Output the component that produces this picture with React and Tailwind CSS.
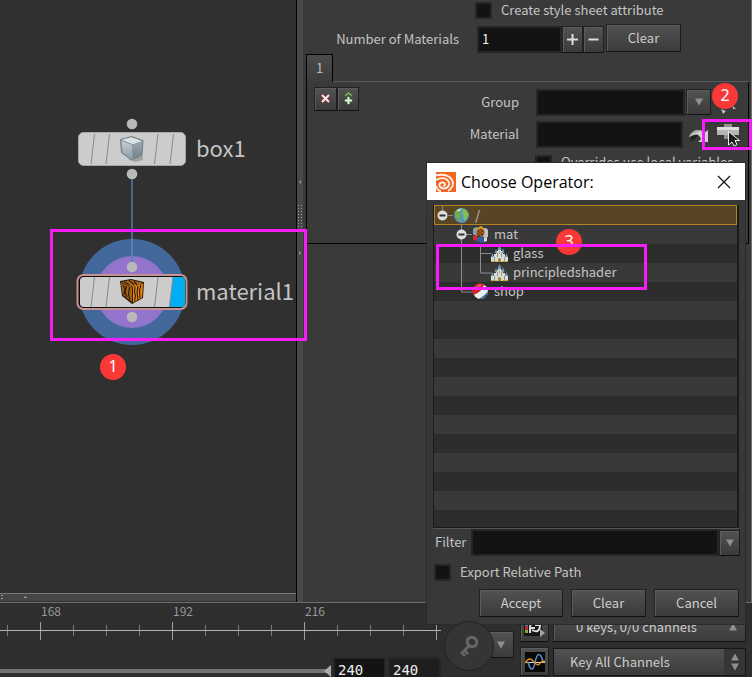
import React from "react";

const controlFont = "font-['Noto_Sans_CJK_SC',sans-serif]";

function Raised({ className = "", children, ...rest }) {
  return (
    <button
      type="button"
      className={
        "flex items-center justify-center border border-t-[#222] border-r-[#1c1c1c] border-b-[#111] border-l-[#222] bg-linear-to-b from-[#525252] to-[#3b3b3b] shadow-[inset_1px_1px_0_#5c5c5c] text-[#cccccc] " +
        className
      }
      {...rest}
    >
      {children}
    </button>
  );
}

function Check({ id, label }) {
  return (
    <div className="flex items-center gap-[9px]">
      <input
        id={id}
        type="checkbox"
        className="size-[17px] shrink-0 appearance-none border-2 border-[#262626] bg-[#131313] checked:bg-[#e0a030]"
      />
      <label htmlFor={id} className="pb-[2px] whitespace-nowrap">
        {label}
      </label>
    </div>
  );
}

function Down({ className = "" }) {
  return (
    <svg width="8" height="8" viewBox="0 0 8 8" className={className} aria-hidden="true">
      <path d="M0 0.5h8L4 7.5z" fill="#8f8f8f" />
    </svg>
  );
}

function Badge({ className, children }) {
  return (
    <span
      className={
        "absolute flex size-[26px] items-center justify-center rounded-full bg-[#fb3838] pb-[2px] font-['Noto_Sans',sans-serif] text-base leading-none text-white " +
        className
      }
    >
      {children}
    </span>
  );
}

function Network() {
  return (
    <svg
      className="absolute top-0 left-0"
      width="296"
      height="400"
      viewBox="0 0 296 400"
      role="img"
      aria-label="Network"
    >
      <defs>
        <linearGradient id="boxLeft" x1="0" y1="0" x2="0" y2="1">
          <stop offset="0" stopColor="#c4ced5" />
          <stop offset="1" stopColor="#8c9ca7" />
        </linearGradient>
        <linearGradient id="boxRight" x1="0" y1="0" x2="0" y2="1">
          <stop offset="0" stopColor="#9dabb4" />
          <stop offset="1" stopColor="#6d808c" />
        </linearGradient>
      </defs>
      <circle cx="132" cy="292" r="53" fill="#42689c" />
      <circle cx="132" cy="292" r="36" fill="#9274cd" />
      <path d="M132 174V239" stroke="#48678f" strokeWidth="2" />
      <path d="M132 239V267" stroke="#5681bb" strokeWidth="2" />
      <g fill="#b9b9b9">
        <circle cx="132" cy="124" r="5.3" />
        <circle cx="132" cy="174" r="5.3" />
        <circle cx="132" cy="267" r="5.3" />
        <circle cx="132" cy="317" r="5.3" />
      </g>
      <rect x="78.500" y="132.500" width="107" height="33" rx="5" fill="#cccccc" stroke="#a8a8a8" />
      <path d="M94.500 134L91 164M109.500 134L106 164M158 134L154.500 164M173.500 134L170 164" stroke="#8a8a8a" />
      <path d="M128 159l14-6 1 7-8 2z" fill="#8f8f8f" opacity=".7" />
      <path d="M120.500 139.500l11-3 11.500 4-1 14.500-10.500 5-10-7.500z" fill="#8c989f" stroke="#737c82" strokeLinejoin="round" />
      <path d="M121.500 139.800l10-2.500 10.500 3.700-9 3.300z" fill="#dbe2e6" />
      <path d="M121.500 141l10.500 4v14l-9.500-7z" fill="url(#boxLeft)" />
      <path d="M133 145l9-3.500-1 13-8 4.300z" fill="url(#boxRight)" />
      <rect x="77.500" y="275" width="109" height="34" rx="6" fill="#111" stroke="#c99292" strokeWidth="2" />
      <rect x="80" y="277" width="105" height="30" rx="4" fill="#cccccc" />
      <path d="M173 277h8q4 0 4 4v22q0 4-4 4h-12z" fill="#00adf2" />
      <path d="M94.500 277L91 307M109.500 277L106 307M158 277L154.500 307M173 277L169.500 307" stroke="#8a8a8a" />
      <path d="M120 281l11-2 13 3-1 16-11 6-10-8z" fill="#2a1a0c" />
      <path d="M121 282l10-2 12 3-10 4z" fill="#b4691a" />
      <path d="M121 283l11 4v15l-9-7z" fill="#a96118" />
      <path d="M133 287l10-3.500-1 14-9 5z" fill="#ef860e" />
      <path
        d="M135 287l-.5 5 1 4-1 5M138 286l-1 6 1 8M141 285l-1.500 5 .5 8M123 285l2 4-1 6M126.500 286l-1.500 6 2 5M129.500 287l-1 7 1.500 6M124 281.500l5 3M129 280.500l5 4M134 281.500l3 3"
        stroke="#26160a"
        strokeWidth="1.100"
        fill="none"
      />
    </svg>
  );
}

function Globe() {
  return (
    <svg width="17" height="17" viewBox="0 0 17 17" aria-hidden="true">
      <circle cx="8.500" cy="8.500" r="7.500" fill="#5793c6" />
      <path d="M1.500 6Q4 1 9 1.500L8 4 6 5.500l2 2L7 11l1 4Q4 13 3.500 10z" fill="#6fae3f" />
      <path d="M10 2q5 1 5.500 6L13.500 11l-1.500 3-2-3 .5-3L9 6z" fill="#83c050" />
      <path d="M3 4Q6 1 9 1.500L6 4.500z" fill="#d6edf3" opacity=".8" />
    </svg>
  );
}

function MatIcon() {
  return (
    <svg width="17" height="17" viewBox="0 0 17 17" aria-hidden="true">
      <path d="M1 3l3-2 4 2v6L4 10 1 8z" fill="#8da1b3" />
      <path d="M10 3l4-1 2 2v7l-3 1-3-2z" fill="#bac4cb" />
      <path d="M5 2l4-2 3 2v3H5z" fill="#e0a423" />
      <circle cx="8.500" cy="6.500" r="4" fill="#9c5b17" />
      <path d="M6 5l5 4M8 3l3 3M5 7l3 3" stroke="#54300c" />
      <path d="M1 10l4-1 1 5-3 1-2-2z" fill="#d4292b" />
      <path d="M5 12l4-2 3 2v4l-3 1-4-2z" fill="#315f9e" />
      <path d="M12 12l3-1v4l-3 1z" fill="#d9d6ce" />
    </svg>
  );
}

function Castle() {
  return (
    <svg width="17" height="17" viewBox="0 0 17 17" aria-hidden="true">
      <path d="M0 17v-5h3V9h2V6h2V4h3v2h2v3h2v3h3v5z" fill="#dcdcd2" />
      <path d="M0 12L1.500 8 3 12zM3.500 8L5 4l1.500 4zM6.500 5l2-5 2 5zM10.500 8L12 3l1.500 5zM14 12l1.500-4 1.500 4z" fill="#6c9fc4" />
      <path d="M7 17v-3q1.500-2 3 0v3z" fill="#a8843b" />
      <path d="M3.500 12v5M13.500 12v5M6.500 8v4M10.500 8v4" stroke="#8b9696" />
      <path d="M0 16.500h6M11 16.500h6M8.500 6v3" stroke="#c9a94e" />
    </svg>
  );
}

function ShopIcon() {
  return (
    <svg width="17" height="17" viewBox="0 0 17 17" aria-hidden="true">
      <circle cx="8.500" cy="8.500" r="7.500" fill="#eceff2" />
      <path d="M1.500 12A7.500 7.500 0 0 1 12 1.800Q10 9 1.500 12z" fill="#d32526" />
      <path d="M7 15.800A7.500 7.500 0 0 0 15.900 8Q13 13 7 15.800z" fill="#2c5f98" />
      <path d="M4 5q2-3 5-3" stroke="#f09a94" fill="none" />
    </svg>
  );
}

function Minus() {
  return (
    <svg width="11" height="11" viewBox="0 0 11 11" aria-hidden="true">
      <circle cx="5.500" cy="5.500" r="5" fill="#dedede" />
      <path d="M2.500 5.500h6" stroke="#333" strokeWidth="2" />
    </svg>
  );
}

function Swirl() {
  return (
    <svg width="20" height="20" viewBox="0 0 20 20" aria-hidden="true">
      <path d="M0 0h20v20H0z" fill="#f26522" />
      <path
        d="M0 3.500Q8 1.500 13.500 5 18 9 16.500 14 15 17.500 12 19M0 8Q5 5 10 7 14 9.500 12.800 13.500 11 17 6.500 16.300 3 15 3.300 12.500 4 10.300 6.500 10.300 9.300 10.500 9 12.800 8.500 14 7 13.500M0 14Q1 18 5 19.500"
        fill="none"
        stroke="#fff0e8"
        strokeWidth="1.800"
      />
    </svg>
  );
}

const stripes = Array.from({ length: 12 }, (_, i) => i);

function Dialog() {
  return (
    <section
      aria-label="Choose Operator"
      className="absolute top-[163px] right-[7px] flex w-[318px] flex-col bg-[#383838] shadow-[0_0_0_1px_#2b2b2b]"
    >
      <header className="flex h-[37px] items-center bg-white pr-[14px] pl-[9px]">
        <Swirl />
        <h1 className="ml-[5px] flex-1 font-['Open_Sans',sans-serif] text-base text-black">Choose Operator:</h1>
        <button type="button" aria-label="Close">
          <svg width="14" height="14" viewBox="0 0 14 14" aria-hidden="true">
            <path d="M1 1l12 12M13 1L1 13" stroke="#111" strokeWidth="1.200" />
          </svg>
        </button>
      </header>
      <div className="mx-[6px] mt-[5px] h-[323px] overflow-hidden border-r-2 border-b border-l border-[#1b1b1b] bg-[#2d2d2d] shadow-[0_1px_0_#555]">
        <ul className="relative">
          <svg className="absolute top-0 left-0" width="60" height="96" viewBox="0 0 60 96" aria-hidden="true">
            <path d="M8.500 1v4M13 10.500h6M27.500 20v67h11M32 29.500h6M46.500 40v28h11M46.500 48.500h11" fill="none" stroke="#8b8b8b" />
          </svg>
          <li className="flex h-5 items-center gap-[5px] border border-[#b6841f] bg-[#574526] pl-[2px]">
            <Minus />
            <Globe />
            <span>/</span>
          </li>
          <li className="flex h-[19px] items-center bg-[#393939] pl-[22px]">
            <div className="relative flex items-center gap-[5px]">
              <Minus />
              <MatIcon />
              <span className="pb-[2px]">mat</span>
            </div>
          </li>
          <li className="flex h-[19px] items-center gap-[5px] bg-[#2d2d2d] pl-[57px]">
            <Castle />
            <span className="pb-[2px]">glass</span>
          </li>
          <li className="flex h-[19px] items-center gap-[5px] bg-[#393939] pl-[57px]">
            <Castle />
            <span className="pb-[2px]">principledshader</span>
          </li>
          <li className="flex h-[19px] items-center gap-[5px] bg-[#2d2d2d] pl-[38px]">
            <ShopIcon />
            <span className="pb-[2px]">shop</span>
          </li>
          {stripes.map((i) => (
            <li key={i} className={i % 2 ? "h-[19px] bg-[#2d2d2d]" : "h-[19px] bg-[#393939]"} />
          ))}
        </ul>
      </div>
      <div className="mr-[5px] ml-2 flex h-[29px] items-center">
        <label htmlFor="filter" className="w-[36px] pb-[2px]">Filter</label>
        <input id="filter" className="h-[27px] min-w-0 flex-1 border-2 border-[#262626] bg-[#131313] px-1" />
        <Raised className="h-[26px] w-[21px]" aria-label="Filter history"><Down /></Raised>
      </div>
      <div className="mt-[2px] flex h-[27px] items-center pl-[7px]">
        <Check id="relative" label="Export Relative Path" />
      </div>
      <footer className="flex justify-end gap-2 pt-[3px] pr-[6px] pb-[7px]">
        <Raised className="h-[28px] w-[84px]">Accept</Raised>
        <Raised className="h-[28px] w-[75px]">Clear</Raised>
        <Raised className="h-[28px] w-[85px]">Cancel</Raised>
      </footer>
    </section>
  );
}

function Parameters() {
  return (
    <section className="w-[449px] shrink-0 overflow-hidden border-r border-[#707070] bg-[#3a3a3a] pr-[2px] pl-[3px]">
      <div className="flex h-[21px] items-center pl-[169px]">
        <Check id="stylesheet" label="Create style sheet attribute" />
      </div>
      <div className="flex h-[33px] items-center pt-[3px]">
        <label htmlFor="count" className="w-[153px] text-right">Number of Materials</label>
        <input
          id="count"
          defaultValue="1"
          className="ml-[18px] h-[27px] w-[85px] border-2 border-[#262626] bg-[#131313] px-[3px] pb-[2px] text-[#f0f0f0]"
        />
        <Raised className="h-[27px] w-[21px]" aria-label="Add">
          <svg width="11" height="11" viewBox="0 0 11 11"><path d="M5.500 0v11M0 5.500h11" stroke="#ddd" strokeWidth="2" /></svg>
        </Raised>
        <Raised className="h-[27px] w-[21px]" aria-label="Remove">
          <svg width="11" height="11" viewBox="0 0 11 11"><path d="M0.500 5.500h10" stroke="#ddd" strokeWidth="2" /></svg>
        </Raised>
        <Raised className="mb-[3px] ml-[2px] h-[28px] w-[75px]">Clear</Raised>
      </div>
      <div className="flex">
        <button
          type="button"
          className="h-[28px] w-[27px] border-x border-t border-black bg-linear-to-b from-[#4b4b4b] to-[#3c3c3c] pb-[2px] text-[#bbb]"
        >
          1
        </button>
        <div className="flex-1 border-b border-[#5a5a5a]" />
      </div>
      <div className="h-[162px] border-r border-b border-l border-black pt-[5px] pl-[7px]">
        <div className="flex h-[31px] items-center">
          <Raised className="mb-2 h-[24px] w-[23px]" aria-label="Delete entry">
            <svg width="11" height="11" viewBox="0 0 11 11">
              <path d="M2 2l7 7M9 2L2 9" stroke="#8c2f2f" strokeWidth="3.600" />
              <path d="M2 2l7 7M9 2L2 9" stroke="#fbe6e6" strokeWidth="2" />
            </svg>
          </Raised>
          <Raised className="mb-2 h-[24px] w-[22px]" aria-label="Insert entry">
            <svg width="11" height="13" viewBox="0 0 11 13">
              <path d="M5.500 4v9M1 8.500h9M2 4l3.500-3L9 4" stroke="#3a6a2a" strokeWidth="3" fill="none" />
              <path d="M5.500 5v7M2 8.500h7" stroke="#e0f3d8" strokeWidth="2" />
              <path d="M2.500 3.500l3-2.500 3 2.500" stroke="#cfe3c7" fill="none" />
            </svg>
          </Raised>
          <label htmlFor="group" className="w-[160px] pb-[2px] text-right">Group</label>
          <input id="group" className="ml-[17px] h-[27px] w-[149px] border-2 border-[#262626] bg-[#131313] px-1" />
          <Raised className="mb-[2px] ml-[1px] h-[26px] w-[25px]" aria-label="Group list"><Down /></Raised>
          <svg className="mt-3 ml-2" width="18" height="12" viewBox="0 0 18 12" aria-hidden="true">
            <path d="M4 11L2 6l5 2zM17 6l-3-3v3z" fill="#bbb" />
          </svg>
        </div>
        <div className="flex h-[33px] items-center">
          <label htmlFor="material" className="w-[205px] pb-[2px] text-right">Material</label>
          <input id="material" className="ml-[17px] h-[27px] w-[147px] border-2 border-[#262626] bg-[#131313] px-1" />
          <button type="button" aria-label="Jump to operator" className="ml-1">
            <svg width="23" height="16" viewBox="0 0 23 16">
              <path d="M3 14Q4 7 9 7l2 2-5 5z" fill="#232323" />
              <path d="M2 10Q5 3 11 3q4 0 6 3l4-3v12H11l3-3Q12 7 9 7.500 5 8 2 10z" fill="#d0d0d0" />
              <path d="M2 10Q5 3 11 3l3 1Q7 5 2 10z" fill="#a3a3a3" />
            </svg>
          </button>
          <button type="button" aria-label="Choose operator" className="ml-[6px]">
            <svg width="25" height="24" viewBox="0 0 25 24">
              <path d="M8 1h8v4H8zM8 12h6v4H8z" fill="#929292" />
              <path d="M1 4h22v8H1z" fill="#b5b5b5" />
              <path d="M1 4h22v3H1z" fill="#dedede" />
              <path d="M12.500 8.500v13.500l3.500-3 2 4 3-1.500-2-4h4.500z" fill="#1b1b1b" stroke="#eee" />
            </svg>
          </button>
        </div>
        <div className="flex h-6 items-center pl-[221px]">
          <Check id="overrides" label="Overrides use local variables" />
        </div>
        <div className="mt-[27px] h-6 w-[118px] text-right">L</div>
      </div>
    </section>
  );
}

const ticks = [7, 40, 73, 106, 139, 172, 205, 238, 271, 304, 337, 370, 403, 436];

function Timeline() {
  return (
    <section className="flex h-[75px] shrink-0 border-t border-[#6e6e6e] bg-[#2e2e2e]">
      <div className="flex w-[441px] shrink-0 flex-col">
        <div className="flex pb-[1px] pl-[41px] text-xs leading-4 text-[#999]">
          <span className="w-[132px]">168</span>
          <span className="w-[132px]">192</span>
          <span>216</span>
        </div>
        <svg className="mt-[2px]" width="441" height="20" viewBox="0 0 441 20" aria-hidden="true">
          {ticks.map((x) => (
            <path
              key={x}
              d={(x - 40) % 132 === 0 ? `M${x + 0.5} 0v18` : `M${x + 0.5} 3v11`}
              stroke={(x - 40) % 132 === 0 ? "#a0a0a0" : "#7d7d7d"}
            />
          ))}
          <path d="M0 8.500h441" stroke="#b3b3b3" />
        </svg>
        <div className="mt-[15px] flex h-[20px]">
          <svg className="mt-2" width="333" height="12" viewBox="0 0 333 12" aria-hidden="true">
            <path d="M0 4h326v4H0z" fill="#737373" />
            <path d="M331 0v12l-7-6z" fill="#aaa" />
          </svg>
          <input aria-label="Range end" defaultValue="240" className="h-[26px] w-[53px] border-2 border-[#262626] bg-[#131313] px-[3px] font-['DejaVu_Sans_Mono',monospace] text-sm text-[#eee]" />
          <input aria-label="Global end" defaultValue="240" className="ml-[2px] h-[26px] w-[53px] border-2 border-[#262626] bg-[#1e1e1e] px-[3px] font-['DejaVu_Sans_Mono',monospace] text-sm text-[#eee]" />
        </div>
      </div>
      <div className="flex flex-1 overflow-hidden">
        <button type="button" aria-label="Set key" className="z-10 mt-[18px] ml-[3px] flex size-[50px] shrink-0 items-center justify-center rounded-full border border-[#222] bg-[#353535]">
          <svg width="20" height="22" viewBox="0 0 20 22">
            <ellipse cx="13" cy="7" rx="5" ry="4.500" fill="none" stroke="#666" strokeWidth="3" transform="rotate(35 13 7)" />
            <path d="M10 11L2 19M5 15l4 4M2 17l4 4" stroke="#666" strokeWidth="2.500" />
          </svg>
        </button>
        <Raised className="mt-7 -ml-2 h-[27px] w-[28px] pl-[2px]" aria-label="Key options"><Down /></Raised>
        <div className="ml-[6px] flex flex-col gap-[5px] pt-[9px]">
          <Raised className="h-[30px] w-[29px]" aria-label="Refresh channels">
            <svg width="23" height="22" viewBox="0 0 23 22">
              <path d="M1 1h18v19H1z" fill="#161616" />
              <path d="M2 4h3v3H2zM2 14h3v3H2z" fill="#70b33b" />
              <path d="M2 7h3v3H2z" fill="#3a79c0" />
              <path d="M2 10h3v4H2z" fill="#c62b2b" />
              <path d="M7 11q1-8 8-4M17 4v5h-5M17 10q-1 8-8 4M7 17v-5h5" fill="none" stroke="#ddd" strokeWidth="2" />
              <path d="M17 13l5 4-5 4z" fill="#a5a5a5" />
            </svg>
          </Raised>
          <Raised className="h-[29px] w-[29px]" aria-label="Channel graph">
            <svg width="20" height="20" viewBox="0 0 20 20">
              <path d="M0 0h20v20H0z" fill="#080808" />
              <path d="M0 10.500h20" stroke="#ddd" />
              <path d="M3 10Q5 18 7.500 17 9 16 10 10 12 2 14 2.500 16.500 3 18 10" fill="none" stroke="#5b8fc9" strokeWidth="1.500" />
              <path d="M0 11Q4 5 7 8L11 12Q14 14 16 10L20 9" fill="none" stroke="#e08c1c" strokeWidth="1.500" />
            </svg>
          </Raised>
        </div>
        <div className="mr-[6px] ml-1 flex min-w-0 flex-1 flex-col gap-[6px] pt-[9px]">
          <Raised className="h-[30px] px-[8px]">
            <span className="flex-1 pb-[1px] pl-[14px] text-left">0 keys, 0/0 channels</span>
            <Down className="rotate-180" />
          </Raised>
          <div className="relative">
            <select
              aria-label="Key scope"
              className="h-[28px] w-full appearance-none border border-[#151515] bg-linear-to-b from-[#525252] to-[#3b3b3b] px-4 text-[#ccc]"
            >
              <option>Key All Channels</option>
            </select>
            <span className="pointer-events-none absolute inset-y-[1px] right-[1px] flex w-[21px] flex-col items-center justify-center gap-[2px] bg-[#353535]">
              <Down className="rotate-180" />
              <Down />
            </span>
          </div>
        </div>
      </div>
    </section>
  );
}

export default function App() {
  return (
    <main className={"relative flex h-screen flex-col overflow-hidden bg-[#303030] text-[13px] leading-[18px] text-[#c4c4c4] " + controlFont}>
      <div className="flex min-h-0 flex-1">
        <section className="relative flex min-w-0 flex-1 flex-col bg-[#303030]">
          <div className="relative flex-1 overflow-hidden">
            <Network />
            <span className="absolute top-[131px] left-[196px] text-[22px] leading-8">box1</span>
            <span className="absolute top-[274px] left-[196px] text-[22px] leading-8">material1</span>
          </div>
          <div className="h-[9px] border-t border-b border-t-[#777] border-b-[#333] bg-[#464646]">
            <svg width="40" height="7" viewBox="0 0 40 7" aria-hidden="true">
              <path d="M1 1h2v1H1zM1 4h2v1H1zM24 4h3v-1h-1v-1h-1v1h-1z" fill="#999" />
            </svg>
          </div>
        </section>
        <div className="flex w-[7px] shrink-0 items-start border-l border-black bg-[#484848]">
          <svg className="mt-[179px]" width="6" height="78" viewBox="0 0 6 78" aria-hidden="true">
            <path d="M4 1v4L2 3zM2 72v4l2-2z" fill="#999" />
            <path d="M1.500 26v24M4.500 26v24" stroke="#999" strokeDasharray="1 2" />
          </svg>
        </div>
        <Parameters />
      </div>
      <Timeline />
      <Dialog />
      <Badge className="top-[354px] left-[100px]">1</Badge>
      <Badge className="top-[83px] right-[14px]">2</Badge>
      <Badge className="top-[229px] right-[170px]">3</Badge>
      <div className="pointer-events-none absolute top-[229px] left-[50px] h-[112px] w-[257px] border-[3px] border-[#f71df7]" />
      <div className="pointer-events-none absolute top-[119px] right-0 h-[31px] w-[50px] border-[3px] border-[#f71df7]" />
      <div className="pointer-events-none absolute top-[244px] right-[105px] h-[46px] w-[211px] border-[3px] border-[#f71df7]" />
    </main>
  );
}
